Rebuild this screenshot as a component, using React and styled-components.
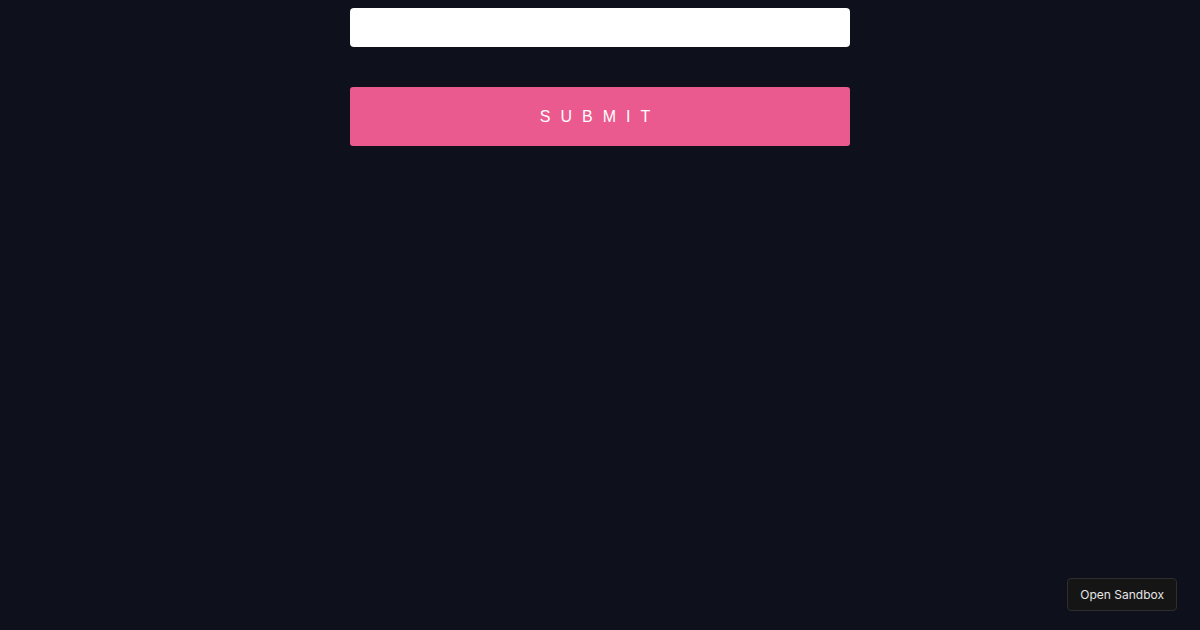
import React from 'react';
import styled, { createGlobalStyle } from 'styled-components';

const GlobalStyle = createGlobalStyle`
  html, body {
    margin: 0;
    padding: 0;
    background-color: #0e111b;
    height: 100%;
  }
  #root {
    min-height: 100vh;
  }
`

const Page = styled.div`
  min-height: 100vh;
  display: flex;
  justify-content: center;
  align-items: flex-start;
  padding-top: 8px;
  box-sizing: border-box;
  font-family: "Liberation Sans", Arial, sans-serif;
`

const Form = styled.form`
  width: 500px;
  display: flex;
  flex-direction: column;
  gap: 40px;
`

const Input = styled.input`
  height: 39px;
  box-sizing: border-box;
  border: none;
  border-radius: 4px;
  background-color: #fff;
  padding: 0 12px;
  font-size: 16px;
  outline: none;
`

const SubmitButton = styled.button`
  height: 59px;
  border: none;
  border-radius: 3px;
  background-color: #eb5a8e;
  color: #fff;
  font-family: "Liberation Sans", Arial, sans-serif;
  font-size: 16px;
  letter-spacing: 10px;
  text-transform: uppercase;
  cursor: pointer;
`

const SandboxLink = styled.a`
  position: fixed;
  right: 23px;
  bottom: 19px;
  padding: 0 12px;
  height: 33px;
  display: flex;
  align-items: center;
  box-sizing: border-box;
  background-color: #151515;
  border: 1px solid #2e2e2e;
  border-radius: 4px;
  color: #e6e6e6;
  font-family: Inter, "Liberation Sans", sans-serif;
  font-size: 12px;
  text-decoration: none;
`

function App () {
  const [value, setValue] = React.useState('');

  return (
    <Page>
      <GlobalStyle />
      <Form onSubmit={(event) => event.preventDefault()}>
        <Input type="text" value={value} onChange={({ target }) => setValue(target.value)} />
        <SubmitButton type="submit">Submit</SubmitButton>
      </Form>
      <SandboxLink href="#">Open Sandbox</SandboxLink>
    </Page>
  );
}

export default App;
